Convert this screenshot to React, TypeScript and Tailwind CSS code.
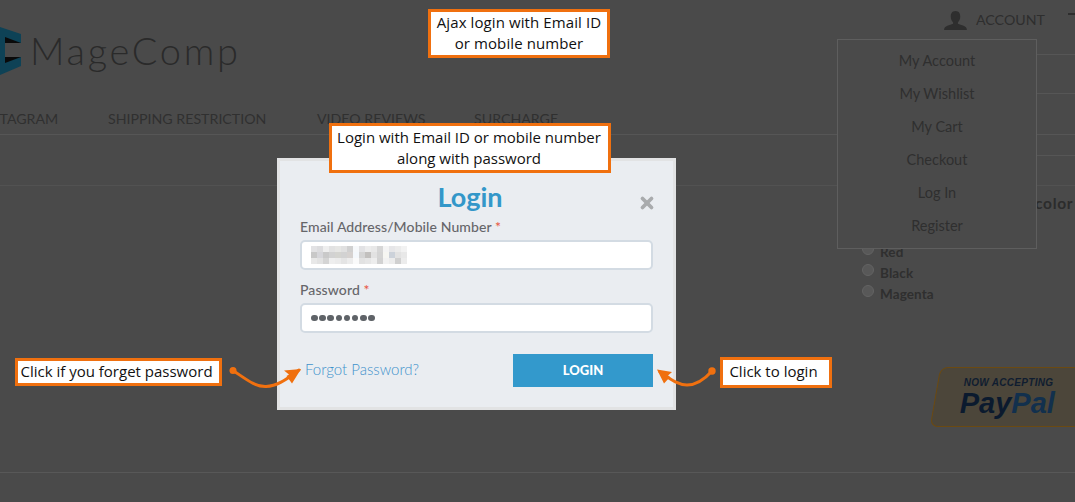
import React from 'react';
import { X } from 'lucide-react';

const accountLinks = ['My Account', 'My Wishlist', 'My Cart', 'Checkout', 'Log In', 'Register'];
const colorOptions = ['Red', 'Black', 'Magenta'];

// pixelated (blurred out) email value, 17 x 3 cells
const blurShades = [
  '#e2e2e4', '#dcdcde', '#eeeeee', '#e2e2e2', '#e6e6e4', '#e0e0e0', '#d0d0d0', '#f6f8fa', '#e2e2e4', '#ececec', '#e8e8e8', '#d6d6d6', '#f4f4f4', '#e6e6e8', '#ebebeb', '#f2f2f2', '#ffffff',
  '#c8c8c8', '#d6d6da', '#c9c9c9', '#d2d2d2', '#d4d4d0', '#d2d2d2', '#d6d2d0', '#f4f8fc', '#d4d4d4', '#c2c0be', '#e2e2e2', '#d4d4d4', '#f6f6f2', '#ccd2da', '#e2e2e2', '#e8e8e8', '#ffffff',
  '#e8e8e8', '#e2e2e2', '#d4d4d4', '#eeeeee', '#ebebeb', '#e4e4e4', '#ececec', '#fafafa', '#e2e2e2', '#e6e6e6', '#ededed', '#d2d2d2', '#f2f2f2', '#ececec', '#d0d0d0', '#ececec', '#ffffff',
];

const Callout: React.FC<{ className: string; children: React.ReactNode }> = ({ className, children }) => (
  <div
    className={`absolute flex items-center justify-center border-[3px] border-[#f0700f] bg-white pb-[1px] text-center text-[15px] leading-[21px] text-[#111] font-['Open_Sans',sans-serif] ${className}`}
  >
    {children}
  </div>
);

const Field: React.FC<{ label: string; className?: string; children: React.ReactNode }> = ({ label, className, children }) => (
  <div className={className}>
    <div className="text-[14px] leading-4 font-medium tracking-[0.1px] text-[#66666a]">
      {label} <span className="text-[#e8553f]">*</span>
    </div>
    <div className="mt-[5px] flex h-[30px] items-center rounded-[5px] border-2 border-[#d3dbe3] bg-white px-[9px]">
      {children}
    </div>
  </div>
);

const App: React.FC = () => {
  return (
    <div className="relative h-[502px] w-[1075px] overflow-hidden bg-[#4a4a4a] font-['Lato',sans-serif] text-[#2f2f2f]">
      {/* page behind the overlay */}
      <header className="h-[135px] border-b border-[#565656]">
        <div className="flex h-[109px]">
          <div className="flex items-start pt-[27px]">
            <svg width="21" height="48" viewBox="0 0 21 48">
              <path d="M0 0 L21 7 V39 L0 48 Z" fill="#0e4256" />
              <path d="M5 10 L21 16 H5 Z M5 30 H21 L5 36 Z" fill="#0a0a0a" />
              <rect x="5" y="16" width="16" height="14" fill="#4a4a4a" />
            </svg>
            <span className="ml-[9px] mt-[-2px] text-[38px] leading-[50px] font-light tracking-[2.700px] text-[#2a2a2a]">MageComp</span>
          </div>
          <div className="ml-auto flex items-start pt-[10px]">
            <svg className="mt-[1px]" width="23" height="19" viewBox="0 0 24 20" fill="#2e2e2e">
              <path d="M12 0 C16 0 17 3 17 6 C17 9 15.500 11 14.500 12 V13.500 C18 15 24 15.500 24 20 H0 C0 15.500 6 15 9.500 13.500 V12 C8.500 11 7 9 7 6 C7 3 8 0 12 0 Z" />
            </svg>
            <span className="ml-[9px] w-[92px] text-[14.200px] leading-5 text-[#2e2e2e]">ACCOUNT</span>
            <div className="mt-[3px] h-[8px] w-[7px] border-t-2 border-[#2e2e2e]" />
          </div>
        </div>
        <nav className="flex w-[1075px] text-[14.200px] leading-5 text-[#303030]">
          <span className="ml-[-23px] w-[131px]">INSTAGRAM</span>
          <span className="w-[209px]">SHIPPING RESTRICTION</span>
          <span className="w-[157px]">VIDEO REVIEWS</span>
          <span>SURCHARGE</span>
        </nav>
      </header>

      <div className="h-[51px] border-b border-[#525252]" />

      <main className="flex h-[287px] justify-end border-b border-[#585858]">
        <aside className="w-[213px] pt-[9px]">
          <div className="pl-[173px] text-[15.500px] leading-4 font-bold tracking-[0.7px] whitespace-nowrap text-[#2c2c2c]">color</div>
          <ul className="mt-[33px] space-y-[5px]">
            {colorOptions.map((option) => (
              <li key={option} className="flex h-4 items-center">
                <span className="mb-[7px] h-3 w-3 rounded-full border border-[#636363] bg-[#585858]" />
                <span className="ml-[6px] text-[13.500px] font-bold tracking-[0.1px] text-[#2f2f2f]">{option}</span>
              </li>
            ))}
          </ul>
          <div className="mt-[65px] ml-[73px] h-[60px] w-[160px] -skew-x-[10deg] rounded-lg border border-[#6b4a12] bg-[#4c463a]">
            <div className="skew-x-[10deg] pl-[26px] pt-[9px] font-['Liberation_Sans',sans-serif]">
              <div className="pl-[1px] text-[10px] leading-3 font-bold italic tracking-[0.300px] text-[#101d30]">NOW ACCEPTING</div>
              <div className="ml-[-3px] text-[29px] leading-[29px] font-bold italic">
                <span className="text-[#0b1a2e]">Pay</span>
                <span className="text-[#12304d]">Pal</span>
              </div>
            </div>
          </div>
        </aside>
      </main>

      {/* header lines running out from behind the dropdown */}
      <div className="absolute right-0 top-[54px] h-[40px] w-[38px] border-y border-[#565656]" />
      <div className="absolute right-0 top-[155px] w-[38px] border-t border-[#565656]" />

      {/* account dropdown */}
      <div className="absolute left-[837px] top-[39px] flex h-[210px] w-[200px] flex-col border border-[#5e5e5e] bg-[#4a4a4a] py-[4px] text-center text-[14.500px] text-[#2f2f2f]">
        {accountLinks.map((link) => (
          <div key={link} className="flex h-[33px] items-center justify-center">
            {link}
          </div>
        ))}
      </div>

      {/* login modal */}
      <div className="absolute left-[277px] top-[158px] h-[252px] w-[399px] border-[3px] border-[#e2e3e4] bg-[#eaedf1] px-[20px]">
        <div className="relative h-[57px] pt-[19px] pr-[13px] text-center text-[27px] leading-[34px] font-bold text-[#3397c9]">
          Login
          <X className="absolute right-[-3px] top-[33px] text-[#a9abad]" size={18} strokeWidth={5} />
        </div>
        <Field label="Email Address/Mobile Number" className="mt-[1px]">
          <div className="grid h-[18px] w-[102px] grid-cols-[repeat(17,1fr)] grid-rows-3">
            {blurShades.map((shade, i) => (
              <span key={i} style={{ backgroundColor: shade }} />
            ))}
          </div>
        </Field>
        <Field label="Password" className="mt-[12px]">
          <div className="flex gap-[1.700px]">
            {Array.from({ length: 8 }).map((_, i) => (
              <span key={i} className="h-[6.500px] w-[6.500px] rounded-full bg-[#5f6368]" />
            ))}
          </div>
        </Field>
        <div className="mt-[21px] flex items-center justify-between">
          <a className="mb-[2px] ml-[5px] text-[15px] font-light text-[#3f92cc]">Forgot Password?</a>
          <button className="h-[33px] w-[140px] bg-[#3399cc] text-[13px] font-black text-white">LOGIN</button>
        </div>
      </div>

      {/* callouts */}
      <Callout className="left-[428px] top-[9px] h-[49px] w-[182px]">
        <span className="tracking-[0.100px]">Ajax login with Email ID<br />or mobile number</span>
      </Callout>
      <Callout className="left-[329px] top-[123px] h-[50px] w-[282px] pr-[2px] text-[14.850px]">
        <span>Login with Email ID or mobile number<br />along with password</span>
      </Callout>
      <Callout className="left-[15px] top-[358px] h-[28px] w-[207px] pr-[4px]">Click if you forget password</Callout>
      <Callout className="left-[720px] top-[357px] h-[31px] w-[112px] pr-[5px] pb-[3px]">Click to login</Callout>

      {/* arrows */}
      <svg className="absolute left-[226px] top-[362px]" width="80" height="30" viewBox="0 0 80 30" fill="none">
        <circle cx="7" cy="8.500" r="3.500" fill="#f0700f" />
        <path d="M7 8.500 C20 17 29 25 40 24.500 C53 24 63 15 73 8" stroke="#f0700f" strokeWidth="3" strokeLinecap="round" />
        <path d="M75 7 L58 8.500 L63 12.500 L60.500 14 L66 21.500 Z" fill="#f0700f" />
      </svg>
      <svg className="absolute left-[652px] top-[362px]" width="68" height="28" viewBox="0 0 68 28" fill="none">
        <circle cx="60" cy="9" r="3.700" fill="#f0700f" />
        <path d="M60 9 C52 18 44 23 35 23 C25 23 17 16 8 10" stroke="#f0700f" strokeWidth="3" strokeLinecap="round" />
        <path d="M5 7.500 L20 10 L16 13.500 L18 15 L12 21.500 Z" fill="#f0700f" />
      </svg>
    </div>
  );
};

export default App;
